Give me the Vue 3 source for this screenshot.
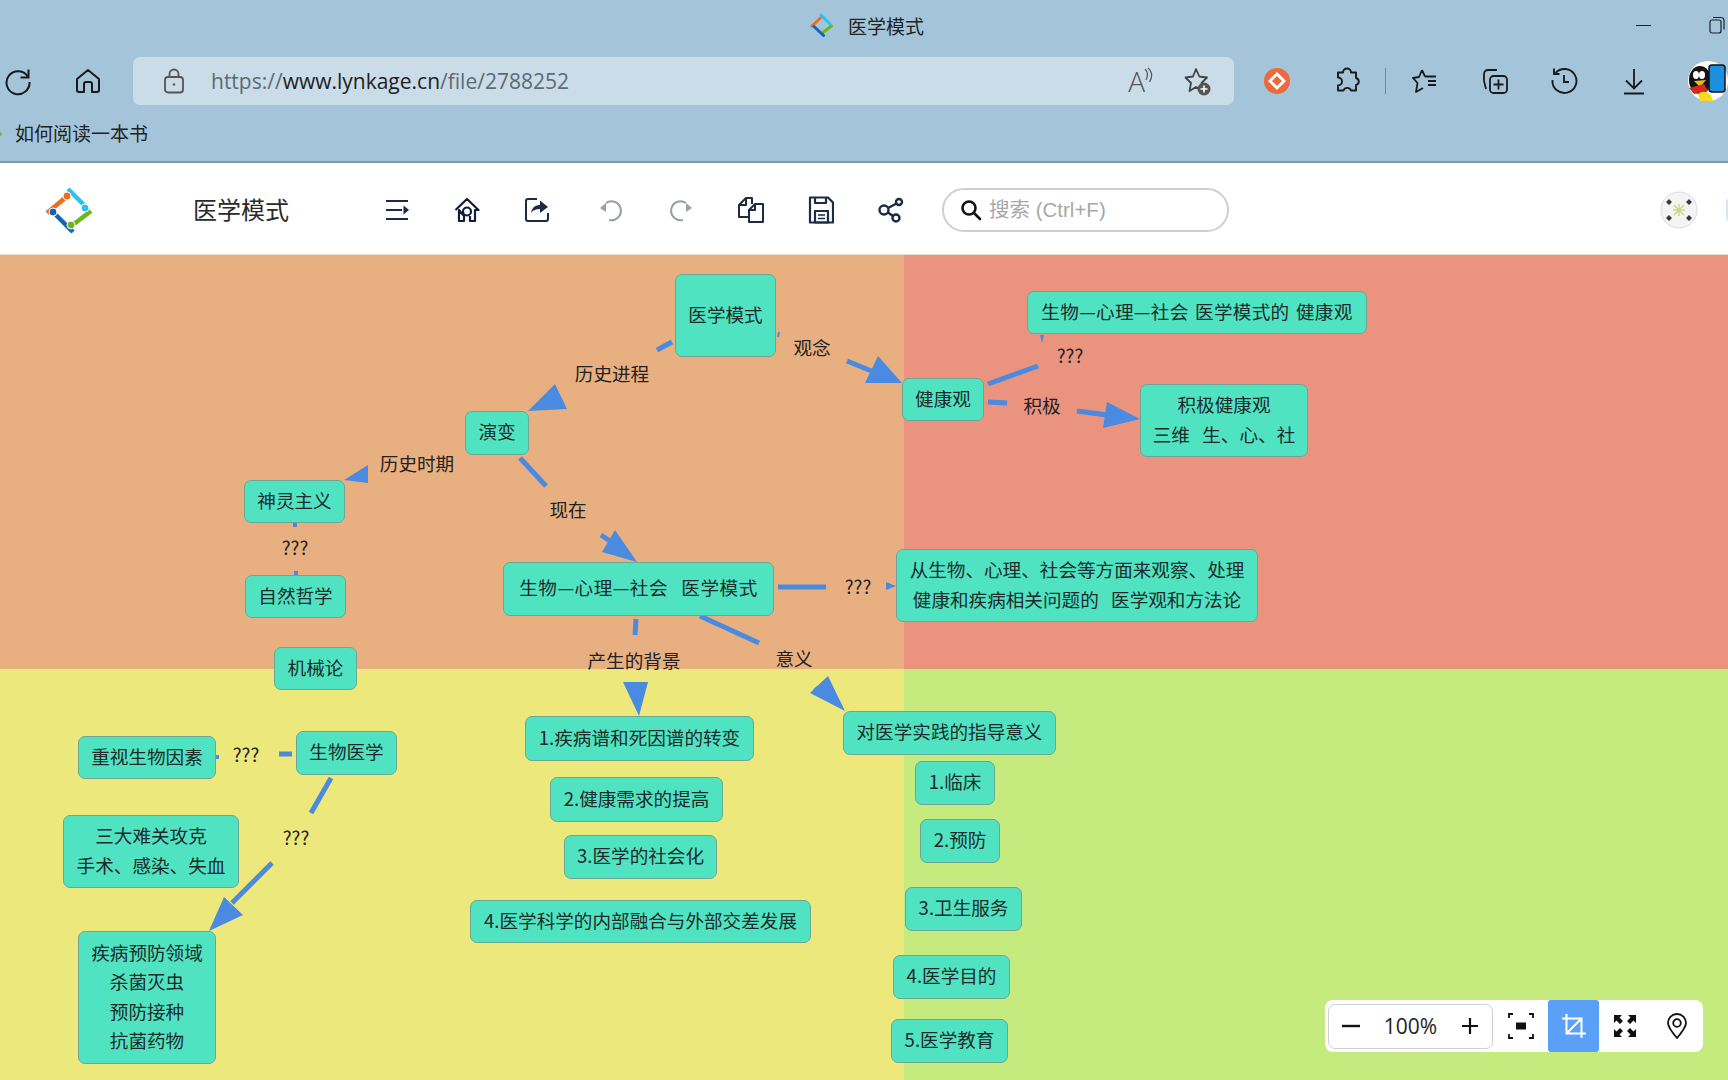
<script setup>
const top = 255;

const nodes = [
  { x: 675, y: 274, w: 101, h: 83, lines: ["医学模式"] },
  { x: 465, y: 411, w: 64, h: 44, lines: ["演变"] },
  { x: 244, y: 480, w: 101, h: 43, lines: ["神灵主义"] },
  { x: 245, y: 575, w: 101, h: 43, lines: ["自然哲学"] },
  { x: 274, y: 647, w: 83, h: 43, lines: ["机械论"] },
  { x: 503, y: 562, w: 271, h: 54, lines: ["生物—心理—社会  医学模式"], spread: 0.5 },
  { x: 902, y: 378, w: 82, h: 43, lines: ["健康观"] },
  { x: 1027, y: 291, w: 340, h: 43, lines: ["生物—心理—社会 医学模式的 健康观"], spread: 0.3 },
  { x: 1140, y: 384, w: 168, h: 73, lines: ["积极健康观", "三维  生、心、社"] },
  { x: 896, y: 549, w: 362, h: 73, lines: ["从生物、心理、社会等方面来观察、处理", "健康和疾病相关问题的  医学观和方法论"] },
  { x: 78, y: 736, w: 138, h: 43, lines: ["重视生物因素"] },
  { x: 296, y: 731, w: 101, h: 44, lines: ["生物医学"] },
  { x: 63, y: 815, w: 176, h: 73, lines: ["三大难关攻克", "手术、感染、失血"] },
  { x: 78, y: 931, w: 138, h: 133, lines: ["疾病预防领域", "杀菌灭虫", "预防接种", "抗菌药物"] },
  { x: 525, y: 716, w: 229, h: 45, lines: ["1.疾病谱和死因谱的转变"] },
  { x: 550, y: 777, w: 173, h: 45, lines: ["2.健康需求的提高"] },
  { x: 564, y: 835, w: 153, h: 44, lines: ["3.医学的社会化"] },
  { x: 470, y: 900, w: 341, h: 43, lines: ["4.医学科学的内部融合与外部交差发展"] },
  { x: 843, y: 711, w: 213, h: 44, lines: ["对医学实践的指导意义"] },
  { x: 915, y: 761, w: 80, h: 44, lines: ["1.临床"] },
  { x: 920, y: 819, w: 80, h: 44, lines: ["2.预防"] },
  { x: 905, y: 887, w: 117, h: 44, lines: ["3.卫生服务"] },
  { x: 893, y: 955, w: 117, h: 44, lines: ["4.医学目的"] },
  { x: 891, y: 1019, w: 117, h: 44, lines: ["5.医学教育"] },
];

const labels = [
  { x: 612, y: 373, text: "历史进程" },
  { x: 812, y: 347, text: "观念" },
  { x: 417, y: 463, text: "历史时期" },
  { x: 568, y: 509, text: "现在" },
  { x: 295, y: 547, text: "???" },
  { x: 858, y: 586, text: "???" },
  { x: 634, y: 660, text: "产生的背景" },
  { x: 794, y: 658, text: "意义" },
  { x: 1070, y: 355, text: "???" },
  { x: 1042, y: 405, text: "积极" },
  { x: 246, y: 754, text: "???" },
  { x: 296, y: 837, text: "???" },
];

const lines = [
  [672, 342, 657, 350, 5],
  [779, 332, 778, 337, 2],
  [847, 361, 874, 372, 5],
  [520, 458, 546, 486, 5],
  [601, 535, 613, 543, 5],
  [295, 523, 295, 527, 4],
  [296, 571, 296, 575, 4],
  [778, 587, 826, 587, 5],
  [636, 619, 635, 635, 5],
  [700, 616, 759, 643, 5],
  [988, 384, 1038, 366, 5],
  [988, 402, 1007, 403, 5],
  [1077, 411, 1107, 415, 5],
  [216, 757, 219, 757, 4],
  [279, 754, 292, 754, 5],
  [331, 778, 311, 813, 5],
  [272, 863, 232, 903, 5],
  [820, 687, 815, 691, 5],
];

const arrows = [
  "528,411 555,384 567,409",
  "878,356 865,383 902,383",
  "344,480 368,465 368,483",
  "615,530 602,552 637,562",
  "886,582 886,590 896,586",
  "623,682 648,682 639,716",
  "828,676 810,693 845,711",
  "1040,335 1044,335 1042,343",
  "1107,402 1103,428 1140,419",
  "209,931 224,897 243,915",
];

function nodeStyle(n) {
  return {
    left: n.x + "px",
    top: n.y - top + "px",
    width: n.w + "px",
    height: n.h + "px",
    letterSpacing: (n.spread || 0) + "px",
  };
}

function labelStyle(l) {
  return { left: l.x + "px", top: l.y - top + "px" };
}
</script>

<template>
  <div class="page">
    <div class="titlebar">
      <div></div>
      <div class="tab-title">
        <svg width="24" height="24" viewBox="0 0 48 46">
          <g fill="none" stroke-width="6" stroke-linecap="round">
            <path d="M4 25L21 9" stroke="#ef6c1f" />
            <path d="M22 3L40 21" stroke="#2cc2ee" />
            <path d="M43 25L26 38" stroke="#6cb51c" />
            <path d="M8 26L27 44" stroke="#1464b4" />
          </g>
        </svg>
        <span>医学模式</span>
      </div>
      <div class="win-controls">
        <span class="win-min"></span>
        <svg width="16" height="18" viewBox="0 0 16 18" fill="none" stroke="#222" stroke-width="1.2">
          <rect x="1" y="4" width="11" height="13" rx="2" />
          <path d="M4 1.5h8a3 3 0 0 1 3 3v9" />
        </svg>
      </div>
    </div>

    <div class="toolbar">
      <div class="tool-icon">
        <svg width="30" height="30" viewBox="0 0 30 30" fill="none" stroke="#1a1a1a" stroke-width="2">
          <path d="M25 11A11.5 11.5 0 1 0 26.5 16" />
          <path d="M25.5 3.5V11.5H17.5" />
        </svg>
      </div>
      <div class="tool-icon">
        <svg width="28" height="28" viewBox="0 0 28 28" fill="none" stroke="#1a1a1a" stroke-width="2" stroke-linejoin="round">
          <path d="M3 12L14 3L25 12V23A2 2 0 0 1 23 25H18V17A2 2 0 0 0 16 15H12A2 2 0 0 0 10 17V25H5A2 2 0 0 1 3 23Z" />
        </svg>
      </div>
      <div class="address">
        <svg class="lock" width="22" height="26" viewBox="0 0 22 26" fill="none" stroke="#555" stroke-width="1.8">
          <rect x="2" y="9" width="18" height="15.5" rx="3" />
          <path d="M6.5 9V6a4.5 4.5 0 0 1 9 0v3" />
          <circle cx="11" cy="16.5" r="1.2" fill="#555" stroke="none" />
        </svg>
        <span class="url"><span class="url-dim">https://</span>www.lynkage.cn<span class="url-dim">/file/2788252</span></span>
        <div class="addr-right">
          <span class="read-a">A<svg width="9" height="16" viewBox="0 0 9 16" fill="none" stroke="#555" stroke-width="1.2"><path d="M1 2C4 5 4 9 2 13" /><path d="M4 1C8.5 5 8.5 10 5.5 15" /></svg></span>
          <svg width="30" height="30" viewBox="0 0 30 30" fill="none" stroke="#444" stroke-width="1.8" stroke-linejoin="round">
            <path d="M14 3L17.3 10.5L25 11.5L19.5 17L21 25L14 21L7.5 25L9 17L3.5 11.5L11 10.5Z" />
            <circle cx="22" cy="23" r="6.5" fill="#555" stroke="none" />
            <path d="M22 19.5V26.5M18.5 23H25.5" stroke="#fff" stroke-width="1.6" />
          </svg>
        </div>
      </div>
      <div class="tool-right">
        <div class="tool-icon">
          <svg width="28" height="28" viewBox="0 0 28 28">
            <circle cx="14" cy="14" r="13" fill="#ec6a3d" />
            <path d="M14 5L23 14L14 23L5 14Z" fill="#fff" />
            <path d="M14 9L19 14L14 19L9 14Z" fill="#ec6a3d" />
          </svg>
        </div>
        <div class="tool-icon">
          <svg width="26" height="28" viewBox="0 0 26 28" fill="none" stroke="#1a1a1a" stroke-width="1.9" stroke-linejoin="round">
            <path d="M9 5.5A4 4 0 0 1 17 5.5H22V11A3.6 3.6 0 0 1 22 18V23.5H17A4 4 0 0 0 9.5 23.5H4V18.5A4 4 0 0 0 4 10.5V5.5Z" />
          </svg>
        </div>
        <span class="tool-sep"></span>
        <div class="tool-icon">
          <svg width="28" height="28" viewBox="0 0 28 28" fill="none" stroke="#1a1a1a" stroke-width="1.8" stroke-linejoin="round">
            <path d="M11 3L14 9.5M14 9.5H25M17 14H25M17 18H25M11 3L8 10L2 11L6.5 16L5 25L12 21" />
          </svg>
        </div>
        <div class="tool-icon">
          <svg width="28" height="28" viewBox="0 0 28 28" fill="none" stroke="#1a1a1a" stroke-width="1.8">
            <path d="M16 3H7A4 4 0 0 0 3 7V14L5 22" />
            <rect x="9" y="9" width="17" height="17" rx="3.5" />
            <path d="M17.5 12.5V22.5M12.5 17.5H22.5" />
          </svg>
        </div>
        <div class="tool-icon">
          <svg width="28" height="28" viewBox="0 0 28 28" fill="none" stroke="#1a1a1a" stroke-width="1.9">
            <path d="M5.5 6A12 12 0 1 1 2.5 13" />
            <path d="M4 1.5V7H9.5" />
            <path d="M14 8V15H19" />
          </svg>
        </div>
        <div class="tool-icon">
          <svg width="24" height="28" viewBox="0 0 24 28" fill="none" stroke="#1a1a1a" stroke-width="1.8">
            <path d="M12 2V21M4 13.5L12 21.5L20 13.5" />
            <path d="M2 26.5H22" stroke-width="2" />
          </svg>
        </div>
        <svg class="qq" width="40" height="40" viewBox="0 0 40 40">
          <circle cx="20" cy="20" r="20" fill="#fff" />
          <ellipse cx="12" cy="19" rx="11" ry="14" fill="#141414" />
          <ellipse cx="8" cy="14" rx="3" ry="4" fill="#fff" />
          <ellipse cx="14" cy="14" rx="3" ry="4" fill="#fff" />
          <path d="M6 20L18 19L12 26Z" fill="#f3b81c" />
          <path d="M1 27L16 23L20 30L6 33Z" fill="#d5291f" />
          <path d="M10 33C16 28 24 32 25 40L12 40Z" fill="#f6dc1e" />
          <rect x="21" y="4" width="16" height="27" rx="3" fill="#1c8fe3" stroke="#111" stroke-width="1.5" />
        </svg>
      </div>
    </div>

    <div class="bookmarks">
      <span class="bm-dot"></span>
      <span>如何阅读一本书</span>
    </div>

    <div class="app-header">
      <svg class="logo" width="48" height="46" viewBox="0 0 48 46">
        <g fill="none" stroke-width="4.5">
          <path d="M2 26L20 11" stroke="#ef6c1f" />
          <path d="M23 2L39 18" stroke="#2cc2ee" />
          <path d="M46 24L29 37" stroke="#6cb51c" />
          <path d="M11 28L28 45" stroke="#1464b4" />
        </g>
        <circle cx="22" cy="9" r="4" fill="#ef6c1f" stroke="#fff" />
        <circle cx="40" cy="21" r="4" fill="#2cc2ee" stroke="#fff" />
        <circle cx="26" cy="38" r="4" fill="#6cb51c" stroke="#fff" />
        <circle cx="8" cy="25" r="4" fill="#1464b4" stroke="#fff" />
      </svg>
      <span class="doc-title">医学模式</span>
      <div class="app-tools">
        <div class="tool-icon">
          <svg width="24" height="24" viewBox="0 0 24 24" fill="none" stroke="#1c2a44" stroke-width="2">
            <path d="M1 3H23M1 12H17M1 21H23" />
            <path d="M18.5 7.5L24 12L18.5 16.5Z" fill="#1c2a44" stroke="none" />
          </svg>
        </div>
        <div class="tool-icon">
          <svg width="26" height="26" viewBox="0 0 26 26" fill="none" stroke="#111c38" stroke-width="2.2" stroke-linejoin="round">
            <path d="M1.5 13L13 2L24.5 13H21V24H16V19M10 19V24H5V13Z" />
            <circle cx="13" cy="14.5" r="4" />
          </svg>
        </div>
        <div class="tool-icon">
          <svg width="26" height="26" viewBox="0 0 26 26" fill="none" stroke="#1c2a44" stroke-width="2">
            <path d="M13 2H4A2 2 0 0 0 2 4V22A2 2 0 0 0 4 24H22A2 2 0 0 0 24 22V16" />
            <path d="M7 16C8 10 12 8 16 8V3.5L24 10L16 16V12C12 12 9 13 7 16Z" fill="#1c2a44" stroke="none" />
          </svg>
        </div>
        <div class="tool-icon undo">
          <svg width="26" height="26" viewBox="0 0 26 26" fill="none" stroke="#9a9ea6" stroke-width="2">
            <path d="M8 6A9.5 9.5 0 1 1 11 23" />
            <path d="M2 11L8 15V6Z" fill="#9a9ea6" stroke="none" />
          </svg>
        </div>
        <div class="tool-icon">
          <svg width="26" height="26" viewBox="0 0 26 26" fill="none" stroke="#9a9ea6" stroke-width="2">
            <path d="M18 6A9.5 9.5 0 1 0 15 23" />
            <path d="M24 11L18 15V6Z" fill="#9a9ea6" stroke="none" />
          </svg>
        </div>
        <div class="tool-icon">
          <svg width="28" height="28" viewBox="0 0 28 28" fill="none" stroke="#1c2a44" stroke-width="2" stroke-linejoin="round">
            <path d="M11 21H2V9L9 2H15V8" />
            <path d="M9 2V9H2" />
            <path d="M12 14L18 8H26V26H12Z" />
            <path d="M18 8V14H12" />
          </svg>
        </div>
        <div class="tool-icon">
          <svg width="26" height="28" viewBox="0 0 26 28" fill="none" stroke="#1c2a44" stroke-width="2.2" stroke-linejoin="round">
            <path d="M2 1.5H20L25 6.5V26.5H2Z" />
            <path d="M7 1.5V7H18V1.5" />
            <rect x="7" y="15" width="13" height="11.5" />
            <path d="M10 19H17M10 22.5H17" stroke-width="1.5" />
          </svg>
        </div>
        <div class="tool-icon">
          <svg width="26" height="26" viewBox="0 0 26 26" fill="none" stroke="#1c2a44" stroke-width="2.4">
            <circle cx="6" cy="13" r="4.5" />
            <circle cx="21" cy="5" r="3" />
            <circle cx="18" cy="21" r="3.5" />
            <path d="M10 11L18.5 6.5M10 15.5L15 19" />
          </svg>
        </div>
      </div>
      <div class="search">
        <svg width="22" height="22" viewBox="0 0 22 22" fill="none" stroke="#111" stroke-width="2.6" stroke-linecap="round">
          <circle cx="9" cy="9" r="6.5" />
          <path d="M14 14L20 20" />
        </svg>
        <span class="search-text">搜索 (Ctrl+F)</span>
      </div>
      <svg class="user" width="38" height="38" viewBox="0 0 38 38">
        <circle cx="19" cy="19" r="18" fill="#f4f4f2" stroke="#dcdcdc" />
        <g fill="#3a3a3a">
          <path d="M9 8l3 3-3 3-3-3zM29 8l3 3-3 3-3-3zM9 24l3 3-3 3-3-3zM29 24l3 3-3 3-3-3z" />
        </g>
        <path d="M13 19h12M19 13v12M14 14l10 10M24 14l-10 10" stroke="#c8d88a" stroke-width="1.5" />
      </svg>
      <span class="user-edge"></span>
    </div>

    <div class="canvas">
      <div class="quads">
        <div class="quad orange"></div>
        <div class="quad red"></div>
        <div class="quad yellow"></div>
        <div class="quad green"></div>
      </div>

      <svg class="edges" width="1728" height="825" viewBox="0 255 1728 825">
        <line
          v-for="(l, i) in lines"
          :key="i"
          :x1="l[0]"
          :y1="l[1]"
          :x2="l[2]"
          :y2="l[3]"
          :stroke-width="l[4]"
          stroke="#4a8ae0"
        />
        <polygon v-for="p in arrows" :key="p" :points="p" fill="#4a8ae0" />
      </svg>

      <div v-for="(n, i) in nodes" :key="i" class="node" :style="nodeStyle(n)">
        <div v-for="(line, j) in n.lines" :key="j">{{ line }}</div>
      </div>

      <span v-for="(l, i) in labels" :key="i" class="edge-label" :style="labelStyle(l)">{{ l.text }}</span>

      <div class="zoom-panel">
        <div class="zoom-box">
          <svg width="20" height="20" viewBox="0 0 20 20" stroke="#111" stroke-width="2.4"><path d="M1 10H19" /></svg>
          <span>100%</span>
          <svg width="20" height="20" viewBox="0 0 20 20" stroke="#111" stroke-width="2.2"><path d="M2 10H18M10 2V18" /></svg>
        </div>
        <div class="zoom-btn">
          <svg width="26" height="26" viewBox="0 0 26 26" fill="none" stroke="#111" stroke-width="1.8">
            <path d="M1 5V1H5M21 1H25V5M25 21V25H21M5 25H1V21" />
            <rect x="8" y="9.5" width="10" height="7" fill="#111" stroke="none" />
          </svg>
        </div>
        <div class="zoom-btn active">
          <svg width="26" height="26" viewBox="0 0 26 26" fill="none" stroke="#fff" stroke-width="2">
            <path d="M1 5.5H20.5V25M5.5 1V20.5H25M5.5 20.5L20.5 5.5" />
          </svg>
        </div>
        <div class="zoom-btn">
          <svg width="26" height="26" viewBox="0 0 26 26" fill="#111">
            <path d="M2 2H10L7.5 4.5L11 8L8 11L4.5 7.5L2 10ZM24 2V10L21.5 7.5L18 11L15 8L18.5 4.5L16 2ZM2 24V16L4.5 18.5L8 15L11 18L7.5 21.5L10 24ZM24 24H16L18.5 21.5L15 18L18 15L21.5 18.5L24 16Z" />
          </svg>
        </div>
        <div class="zoom-btn">
          <svg width="22" height="26" viewBox="0 0 22 26" fill="none" stroke="#111" stroke-width="1.8">
            <path d="M11 25C5 18 2 14 2 10A9 9 0 0 1 20 10C20 14 17 18 11 25Z" />
            <circle cx="11" cy="10" r="3.8" />
          </svg>
        </div>
      </div>
    </div>
  </div>
</template>

<style>
html,
body {
  margin: 0;
  overflow: hidden;
}
</style>

<style scoped>
.page {
  width: 1728px;
  height: 1080px;
  display: flex;
  flex-direction: column;
  overflow: hidden;
  background: #a4c5d9;
  font-family: "Noto Sans CJK SC", "Liberation Sans", sans-serif;
  color: #222;
}

.titlebar {
  height: 54px;
  flex-shrink: 0;
  box-sizing: border-box;
  padding-bottom: 4px;
  display: grid;
  grid-template-columns: 1fr auto 1fr;
  align-items: center;
}

.tab-title {
  display: flex;
  align-items: center;
  gap: 14px;
  font-size: 19px;
  padding-left: 6px;
}

.win-controls {
  display: flex;
  justify-content: flex-end;
  align-items: center;
  gap: 58px;
  padding-right: 3px;
}

.win-min {
  width: 15px;
  height: 1px;
  background: #222;
}

.toolbar {
  height: 54px;
  flex-shrink: 0;
  display: flex;
  align-items: flex-start;
  padding-top: 3px;
  box-sizing: border-box;
}

.tool-icon {
  width: 36px;
  height: 48px;
  flex-shrink: 0;
  display: flex;
  align-items: center;
  justify-content: center;
}

.toolbar > .tool-icon:nth-child(2) {
  margin-left: 34px;
}

.address {
  margin-left: 27px;
  width: 1101px;
  height: 48px;
  flex-shrink: 0;
  box-sizing: border-box;
  border-radius: 7px;
  background: #c9dce8;
  display: flex;
  align-items: center;
  padding-left: 30px;
}

.lock {
  margin-right: 26px;
}

.url {
  font-family: "Open Sans", "Liberation Sans", sans-serif;
  font-size: 21px;
  color: #222;
  white-space: nowrap;
}

.url-dim {
  color: #5d6b75;
}

.addr-right {
  margin-left: auto;
  margin-right: 22px;
  display: flex;
  align-items: center;
  gap: 29px;
}

.read-a {
  display: flex;
  align-items: flex-start;
  font-family: "Open Sans", "Liberation Sans", sans-serif;
  font-size: 28px;
  font-weight: 300;
  line-height: 32px;
  color: #555;
}

.read-a svg {
  margin-top: 2px;
  margin-left: -1px;
}

.tool-right {
  margin-left: 25px;
  display: flex;
  align-items: center;
  gap: 33.7px;
  height: 48px;
}

.tool-sep {
  width: 1px;
  height: 26px;
  margin: 0 -13px;
  background: #6f8a9a;
  flex-shrink: 0;
}

.qq {
  flex-shrink: 0;
  margin-left: 2px;
}

.bookmarks {
  height: 55px;
  flex-shrink: 0;
  box-sizing: border-box;
  border-bottom: 2px solid #7d9aa8;
  display: flex;
  align-items: center;
  font-size: 19px;
  padding-left: 15px;
  padding-bottom: 4px;
  position: relative;
}

.bm-dot {
  position: absolute;
  left: -2px;
  top: 24px;
  width: 4px;
  height: 4px;
  border-radius: 50%;
  background: #7cb342;
}

.app-header {
  height: 92px;
  flex-shrink: 0;
  box-sizing: border-box;
  background: #fff;
  border-bottom: 1px solid #e6dccf;
  display: flex;
  align-items: center;
  padding-left: 45px;
  padding-top: 2px;
}

.doc-title {
  margin-left: 100px;
  font-size: 24px;
  color: #2a2a2a;
  padding-bottom: 2px;
}

.app-tools {
  margin-left: 90px;
  display: flex;
  align-items: center;
  gap: 34px;
}

.undo {
  margin-left: 4px;
}

.search {
  margin-left: 33px;
  width: 287px;
  height: 44px;
  box-sizing: border-box;
  border: 2px solid #cfcfcf;
  border-radius: 22px;
  display: flex;
  align-items: center;
  gap: 7px;
  padding-left: 16px;
  font-family: "Liberation Sans", "Noto Sans CJK SC", sans-serif;
  font-size: 20.5px;
  color: #a8a8a8;
}

.search-text {
  padding-bottom: 4px;
}

.user {
  margin-left: auto;
  flex-shrink: 0;
}

.user-edge {
  width: 2px;
  height: 22px;
  margin-left: 28px;
  border-radius: 6px 0 0 6px;
  background: #d6e8f2;
  flex-shrink: 0;
}

.canvas {
  position: relative;
  flex: 1;
  overflow: hidden;
}

.quads {
  position: absolute;
  inset: 0;
  display: grid;
  grid-template-columns: 904px 1fr;
  grid-template-rows: 414px 1fr;
}

.orange {
  background: #e8b080;
}

.red {
  background: #ea937e;
}

.yellow {
  background: #ede87c;
}

.green {
  background: #c5eb7f;
}

.edges {
  position: absolute;
  left: 0;
  top: 0;
}

.node {
  position: absolute;
  box-sizing: border-box;
  padding-bottom: 4px;
  display: flex;
  flex-direction: column;
  align-items: center;
  justify-content: center;
  background: #50e3c2;
  border: 1.5px solid #6fa594;
  border-radius: 7px;
  font-size: 18.6px;
  line-height: 29.5px;
  word-spacing: 2px;
  color: #1f2a2a;
  white-space: pre;
}

.edge-label {
  position: absolute;
  transform: translate(-50%, -50%);
  font-size: 18.6px;
  line-height: 26px;
  color: #222;
  white-space: nowrap;
}

.zoom-panel {
  position: absolute;
  right: 25px;
  bottom: 28px;
  height: 52px;
  width: 378px;
  box-sizing: border-box;
  padding-left: 3px;
  background: #fff;
  border-radius: 8px;
  display: flex;
  align-items: center;
}

.zoom-box {
  width: 165px;
  height: 45px;
  flex-shrink: 0;
  box-sizing: border-box;
  border: 1px solid #cfd0d6;
  border-radius: 7px;
  display: flex;
  align-items: center;
  justify-content: space-between;
  padding: 0 12px;
  font-family: "Open Sans", "Liberation Sans", sans-serif;
  font-size: 21px;
  color: #222;
}

.zoom-btn {
  width: 52px;
  height: 52px;
  flex-shrink: 0;
  display: flex;
  align-items: center;
  justify-content: center;
}

.zoom-box + .zoom-btn {
  width: 55px;
}

.active {
  width: 51px;
  background: #5aa0f8;
  border-radius: 3px;
}
</style>
